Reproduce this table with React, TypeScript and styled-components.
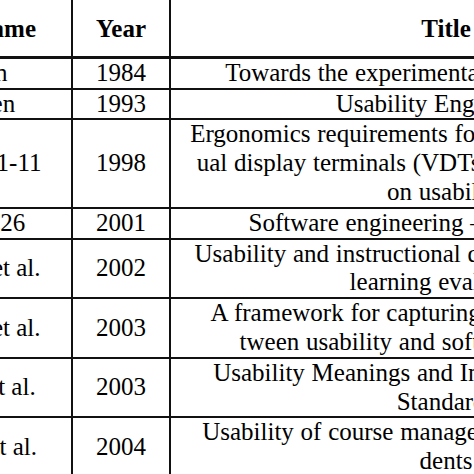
import styled, { createGlobalStyle } from "styled-components";

type Row = {
  name: string;
  year: string;
  title: string[];
};

const ROWS: Row[] = [
  { name: "Eason", year: "1984", title: ["Towards the experimental study of usability"] },
  { name: "Nielsen", year: "1993", title: ["Usability Engineering"] },
  {
    name: "ISO 9241-11",
    year: "1998",
    title: [
      "Ergonomics requirements for office work with vis-",
      "ual display terminals (VDTs) – Part 11: Guidance",
      "on usability",
    ],
  },
  { name: "ISO 9126", year: "2001", title: ["Software engineering – Product quality"] },
  {
    name: "Reeves et al.",
    year: "2002",
    title: ["Usability and instructional design heuristics for e-", "learning evaluation"],
  },
  {
    name: "Folmer et al.",
    year: "2003",
    title: ["A framework for capturing the relationship be-", "tween usability and software architecture"],
  },
  {
    name: "Abran et al.",
    year: "2003",
    title: ["Usability Meanings and Interpretations in ISO", "Standards"],
  },
  {
    name: "Storey et al.",
    year: "2004",
    title: ["Usability of course management systems by stu-", "dents"],
  },
];

const GlobalStyle = createGlobalStyle`
  html, body {
    margin: 0;
    padding: 0;
    background: #fff;
  }
`;

const App = () => {
  return (
    <>
      <GlobalStyle />
      <Viewport>
        <Table>
          <colgroup>
            <col style={{ width: 190 }} />
            <col style={{ width: 98 }} />
            <col style={{ width: 552 }} />
          </colgroup>
          <thead>
            <tr>
              <HeadCell $align="right">Name</HeadCell>
              <HeadCell>Year</HeadCell>
              <HeadCell>Title</HeadCell>
            </tr>
          </thead>
          <tbody>
            {ROWS.map((row, i) => (
              <tr key={i}>
                <Cell>{row.name}</Cell>
                <Cell>{row.year}</Cell>
                <Cell>
                  {row.title.map((line, j) => (
                    <TitleLine key={j}>{line}</TitleLine>
                  ))}
                </Cell>
              </tr>
            ))}
          </tbody>
        </Table>
      </Viewport>
    </>
  );
};

const Viewport = styled.div`
  width: 474px;
  height: 474px;
  overflow: hidden;
  background: #fff;
`;

const Table = styled.table`
  border-collapse: collapse;
  table-layout: fixed;
  width: 840px;
  margin-left: -119px;
  font-family: "Liberation Serif", "Times New Roman", serif;
  font-size: 25px;
  line-height: 28.8px;
  color: #000;
`;

const HeadCell = styled.th<{ $align?: "center" | "right" }>`
  padding: 15px ${(p) => (p.$align === "right" ? "35px" : "0")} 12px 0;
  text-align: ${(p) => p.$align ?? "center"};
  font-weight: bold;
  white-space: nowrap;
  border-left: 2px solid #111;
  border-right: 2px solid #111;
  border-bottom: 3px solid #111;
`;

const Cell = styled.td`
  padding: 0;
  text-align: center;
  vertical-align: middle;
  white-space: nowrap;
  border: 2px solid #111;
`;

const TitleLine = styled.div`
  display: block;
  word-spacing: 0.5px;
`;

export default App;
